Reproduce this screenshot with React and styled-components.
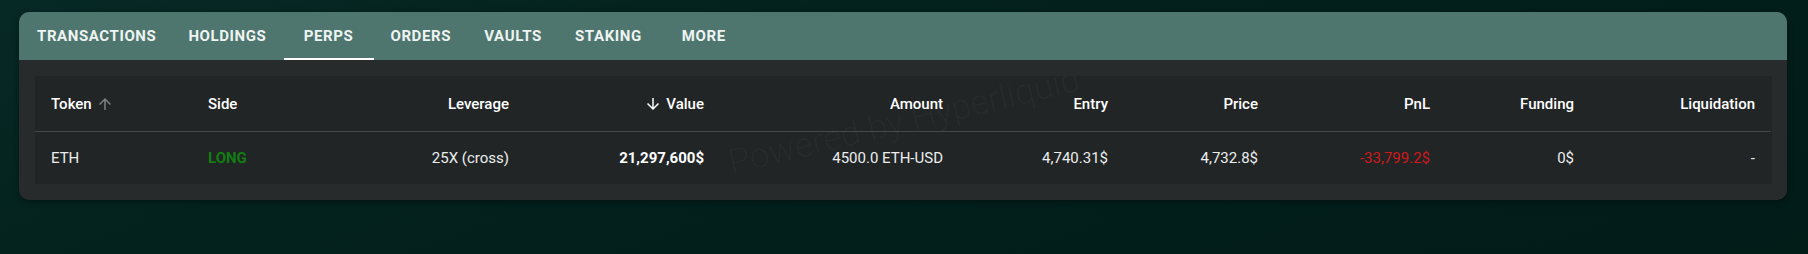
import React from 'react';
import styled, { createGlobalStyle } from 'styled-components';

const GlobalStyle = createGlobalStyle`
  html, body {
    margin: 0;
    padding: 0;
  }
  body {
    width: 1808px;
    height: 254px;
    overflow: hidden;
    font-family: Roboto, "Liberation Sans", sans-serif;
    background: linear-gradient(160deg, #072925 0%, #03211d 35%, #021c18 100%);
  }
`;

const Page = styled.div`
  padding: 12px 21px 0 19px;
`;

const Card = styled.div`
  border-radius: 10px;
  overflow: hidden;
  background: #272b2c;
  box-shadow: 0 2px 6px rgba(0, 0, 0, 0.35);
`;

const TabBar = styled.div`
  display: flex;
  height: 48px;
  padding-left: 2px;
  background: #4e766f;
`;

const Tab = styled.div`
  position: relative;
  display: flex;
  align-items: center;
  justify-content: center;
  min-width: 92px;
  padding: 0 16px;
  box-sizing: border-box;
  font-size: 15px;
  font-weight: 700;
  letter-spacing: 0.6px;
  text-transform: uppercase;
  color: #eef4f2;

  &::after {
    content: '';
    position: absolute;
    left: 2px;
    right: 0;
    bottom: 0;
    height: 2px;
    background: ${(p) => (p.active ? '#ffffff' : 'transparent')};
  }
`;

const Body = styled.div`
  padding: 16px 15px 16px 16px;
`;

const Table = styled.div`
  position: relative;
  overflow: hidden;
  background: #222526;
`;

const Row = styled.div`
  display: grid;
  grid-template-columns: 157px 166px 167px 195px 239px 165px 150px 172px 144px 181px;
`;

const HeadCell = styled.div`
  display: flex;
  align-items: center;
  justify-content: ${(p) => (p.right ? 'flex-end' : 'flex-start')};
  height: 55px;
  padding: 0 16px;
  border-bottom: 1px solid #45494a;
  font-size: 15px;
  font-weight: 500;
  color: #ffffff;
`;

const Cell = styled.div`
  display: flex;
  align-items: center;
  justify-content: ${(p) => (p.right ? 'flex-end' : 'flex-start')};
  height: 52px;
  padding: 0 16px;
  font-size: 15px;
  font-weight: ${(p) => (p.bold ? 700 : 400)};
  color: ${(p) => p.color || '#eceeee'};
`;

const SortIcon = styled.svg`
  width: 18px;
  height: 18px;
  margin: 0 4px;
  fill: ${(p) => (p.active ? '#ffffff' : '#7d8383')};
`;

// faint diagonal brand mark laid over the table
const Watermark = styled.div`
  position: absolute;
  left: 869px;
  top: 45px;
  transform: translate(-50%, -50%) rotate(-13.6deg);
  font-size: 35px;
  font-weight: 300;
  white-space: nowrap;
  color: rgba(255, 255, 255, 0.03);
  pointer-events: none;
`;

const ArrowUp = ({ active }) => (
  <SortIcon viewBox="0 0 24 24" active={active}>
    <path d="M4 12l1.41 1.41L11 7.83V20h2V7.83l5.58 5.59L20 12l-8-8-8 8z" />
  </SortIcon>
);

const ArrowDown = ({ active }) => (
  <SortIcon viewBox="0 0 24 24" active={active}>
    <path d="M20 12l-1.41-1.41L13 16.17V4h-2v12.17l-5.58-5.59L4 12l8 8 8-8z" />
  </SortIcon>
);

const tabs = ['Transactions', 'Holdings', 'Perps', 'Orders', 'Vaults', 'Staking', 'More'];

const position = {
  token: 'ETH',
  side: 'LONG',
  leverage: '25X (cross)',
  value: '21,297,600$',
  amount: '4500.0 ETH-USD',
  entry: '4,740.31$',
  price: '4,732.8$',
  pnl: '-33,799.2$',
  funding: '0$',
  liquidation: '-',
};

const App = () => (
  <>
    <GlobalStyle />
    <Page>
      <Card>
        <TabBar>
          {tabs.map((t) => (
            <Tab key={t} active={t === 'Perps'}>{t}</Tab>
          ))}
        </TabBar>
        <Body>
          <Table>
            <Row>
              <HeadCell>Token<ArrowUp /></HeadCell>
              <HeadCell>Side</HeadCell>
              <HeadCell right>Leverage</HeadCell>
              <HeadCell right><ArrowDown active />Value</HeadCell>
              <HeadCell right>Amount</HeadCell>
              <HeadCell right>Entry</HeadCell>
              <HeadCell right>Price</HeadCell>
              <HeadCell right>PnL</HeadCell>
              <HeadCell right>Funding</HeadCell>
              <HeadCell right>Liquidation</HeadCell>
            </Row>
            <Row>
              <Cell>{position.token}</Cell>
              <Cell bold color="#127d12">{position.side}</Cell>
              <Cell right>{position.leverage}</Cell>
              <Cell right bold color="#ffffff">{position.value}</Cell>
              <Cell right>{position.amount}</Cell>
              <Cell right>{position.entry}</Cell>
              <Cell right>{position.price}</Cell>
              <Cell right color="#d0191c">{position.pnl}</Cell>
              <Cell right>{position.funding}</Cell>
              <Cell right>{position.liquidation}</Cell>
            </Row>
            <Watermark>Powered by Hyperliquid</Watermark>
          </Table>
        </Body>
      </Card>
    </Page>
  </>
);

export default App;
